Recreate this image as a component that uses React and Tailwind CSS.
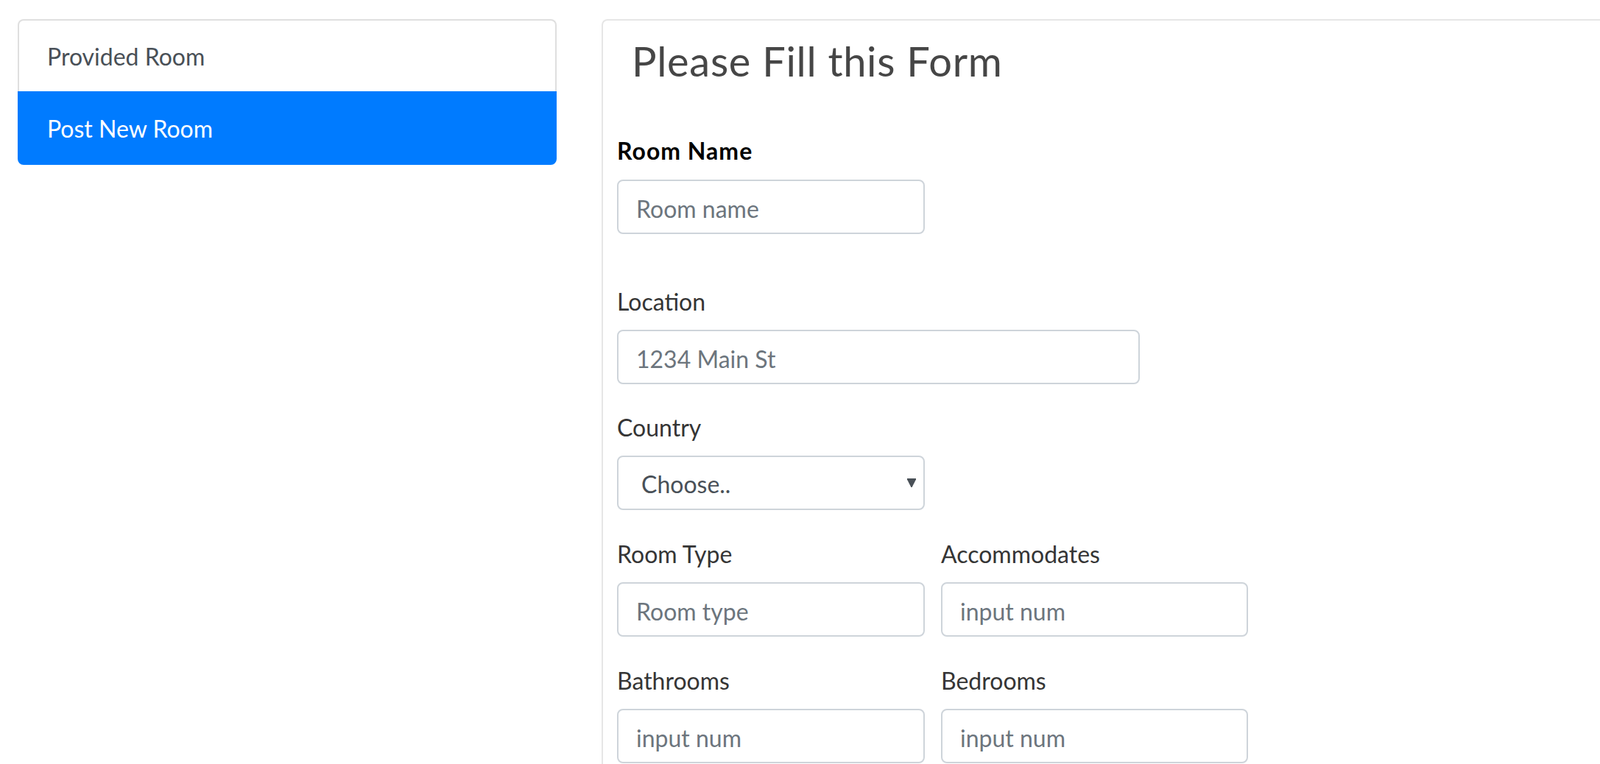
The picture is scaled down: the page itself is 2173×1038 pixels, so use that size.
import React from "react";

const inputCls =
  "block box-border h-[74px] rounded-[8px] border-2 border-[#ced4da] bg-white pl-[24px] pr-[24px] pt-[13px] pb-[9px] text-[32px] leading-[48px] text-[#495057] placeholder:text-[#6c757d] outline-none";

function Label({ children, className = "" }) {
  return (
    <div className={"h-[48px] pt-[3px] text-[32px] leading-[45px] text-[#353535] " + className}>
      {children}
    </div>
  );
}

function Field({ label, placeholder, width, mt = "mt-[34px]" }) {
  return (
    <div className={mt}>
      <Label>{label}</Label>
      <input
        readOnly
        placeholder={placeholder}
        className={inputCls + " mt-[16px] " + width}
      />
    </div>
  );
}

export default function App() {
  return (
    <div
      className="flex h-[1038px] w-full items-start overflow-hidden bg-white"
      style={{ fontFamily: 'Lato, "Open Sans", sans-serif' }}
    >
      {/* Left list group */}
      <div className="ml-[24px] mt-[26px] w-[732px] shrink-0">
        <div className="rounded-t-[8px] border-2 border-b-0 border-[#dfdfdf] bg-white px-[38px] pt-[25px] pb-[23px] text-[32px] leading-[48px] text-[#495057]">
          Provided Room
        </div>
        <div className="rounded-b-[8px] border-2 border-[#007bff] bg-[#007bff] px-[38px] pt-[25px] pb-[23px] text-[32px] leading-[48px] text-white">
          Post New Room
        </div>
      </div>

      {/* Right card */}
      <div className="ml-[61px] mt-[26px] min-h-[1100px] flex-1 rounded-tl-[8px] border-l-2 border-t-2 border-[#e6e6e6] bg-white pl-[19px]">
        <h2 className="ml-[20px] mt-[21px] text-[56px] font-normal leading-[67px] tracking-[0.7px] text-[#464646]">
          Please Fill this Form
        </h2>

        <div className="mt-[63px]">
          <div className="h-[48px] pt-[3px] text-[32px] font-bold leading-[45px] tracking-[1px] text-black">
            Room Name
          </div>
          <input
            readOnly
            placeholder="Room name"
            className={inputCls + " mt-[17px] w-[418px]"}
          />
        </div>

        <Field label="Location" placeholder="1234 Main St" width="w-[710px]" mt="mt-[66px]" />

        <div className="mt-[33px]">
          <Label>Country</Label>
          <div className="relative mt-[16px] w-[418px]">
            <select
              className="block box-border h-[74px] w-[418px] appearance-none rounded-[8px] border-2 border-[#ced4da] bg-white pl-[31px] pr-[40px] pt-[3px] text-[32px] leading-[48px] text-[#495057] outline-none"
              defaultValue="choose"
            >
              <option value="choose">Choose..</option>
            </select>
            <svg
              className="pointer-events-none absolute right-[12px] top-[31px]"
              width="12"
              height="12"
              viewBox="0 0 12 12"
            >
              <path d="M0 0 H12 V1.5 L6.6 12 H5.4 L0 1.5 Z" fill="#495057" />
            </svg>
          </div>
        </div>

        <div className="grid grid-cols-[418px_417px] gap-x-[22px]">
          <Field label="Room Type" placeholder="Room type" width="w-[418px]" />
          <Field label="Accommodates" placeholder="input num" width="w-[417px]" />
          <Field label="Bathrooms" placeholder="input num" width="w-[418px]" />
          <Field label="Bedrooms" placeholder="input num" width="w-[417px]" />
        </div>
      </div>
    </div>
  );
}
